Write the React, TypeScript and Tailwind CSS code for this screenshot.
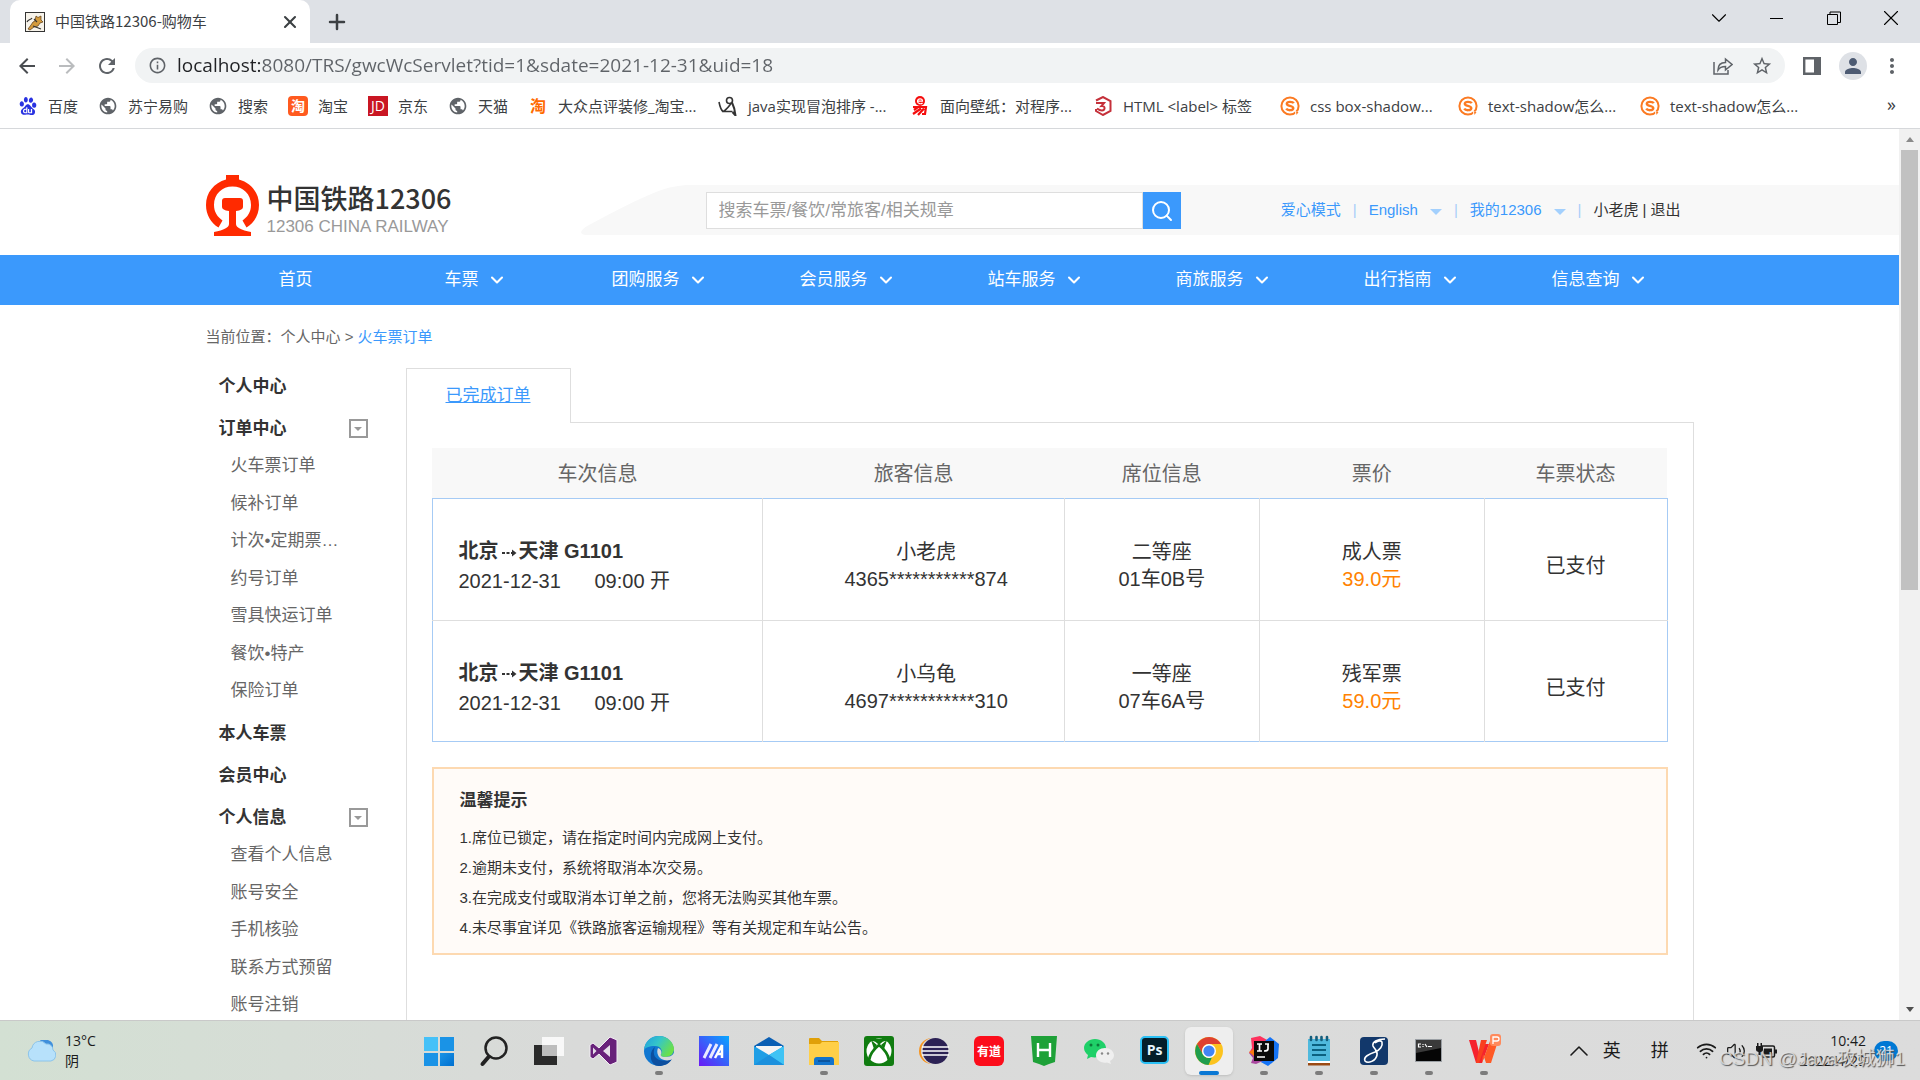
import { useState } from "react";
import type { ReactNode } from "react";
import { ChevronDown, ChevronUp, Plus, Search, X, Wifi, Volume2 } from "lucide-react";
import { MdArrowBack, MdArrowForward, MdInfoOutline, MdMoreVert, MdPerson, MdPublic, MdRefresh, MdStarBorder } from "react-icons/md";
import { SiBaidu } from "react-icons/si";

const NAV = ["团购服务", "会员服务", "站车服务", "商旅服务", "出行指南", "信息查询"];

const ORDER_LINKS = ["火车票订单", "候补订单", "计次•定期票…", "约号订单", "雪具快运订单", "餐饮•特产", "保险订单"];
const INFO_LINKS = ["查看个人信息", "账号安全", "手机核验", "联系方式预留", "账号注销"];

const ORDERS = [
  { name: "小老虎", idNo: "4365***********874", seat: "二等座", place: "01车0B号", kind: "成人票", price: "39.0元" },
  { name: "小乌龟", idNo: "4697***********310", seat: "一等座", place: "07车6A号", kind: "残军票", price: "59.0元" },
];

const TIPS = [
  "1.席位已锁定，请在指定时间内完成网上支付。",
  "2.逾期未支付，系统将取消本次交易。",
  "3.在完成支付或取消本订单之前，您将无法购买其他车票。",
  "4.未尽事宜详见《铁路旅客运输规程》等有关规定和车站公告。",
];

function Globe() {
  return <MdPublic className="size-5 text-[#5f6368]" />;
}

function Sogou() {
  return (
    <svg viewBox="0 0 20 20" className="size-5">
      <circle cx="10" cy="10" r="8.6" fill="none" stroke="#fb7a22" strokeWidth="2" />
      <path d="M13.8 7.2C12.8 5.6 7 5 6.8 7.7C6.7 10.4 13.4 9.3 13.3 12.2C13.2 14.9 7.4 14.6 6.2 12.7" fill="none" stroke="#fb7a22" strokeWidth="2.4" />
      <path d="M15 15l3.5 1-3 3.5z" fill="#fff" />
      <path d="M16 15.5l2.5.5-2 3z" fill="#fb7a22" />
    </svg>
  );
}

function TaoBadge() {
  return (
    <span className="flex size-5 items-center justify-center rounded-sm bg-[#ff5a1f] text-sm leading-none font-bold text-white">淘</span>
  );
}

function JdBadge() {
  return <span className="flex size-5 items-center justify-center bg-[#c91623] text-sm leading-none text-white">JD</span>;
}

const BOOKMARKS: { label: string; width: string; icon: ReactNode }[] = [
  { label: "百度", width: "w-[80px]", icon: <SiBaidu className="size-[18px] text-[#2932e1]" /> },
  { label: "苏宁易购", width: "w-[110px]", icon: <Globe /> },
  { label: "搜索", width: "w-[80px]", icon: <Globe /> },
  { label: "淘宝", width: "w-[80px]", icon: <TaoBadge /> },
  { label: "京东", width: "w-[80px]", icon: <JdBadge /> },
  { label: "天猫", width: "w-[80px]", icon: <Globe /> },
  {
    label: "大众点评装修_淘宝...",
    width: "w-[190px]",
    icon: <span className="text-base leading-none font-bold text-[#ff6a00]">淘</span>,
  },
  {
    label: "java实现冒泡排序 -...",
    width: "w-[192px]",
    icon: (
      <svg viewBox="0 0 20 20" className="size-5" fill="none" stroke="#333" strokeWidth="1.6">
        <circle cx="11.5" cy="4.5" r="3" />
        <path d="M1 6c1 5 2 8 4 9.5 3-1 5-4 8.500-8.500M4.500 15.500h10" />
        <path d="M14 6.500c2 4 3 8 3.500 13l-3-3.500" strokeWidth="2" />
      </svg>
    ),
  },
  {
    label: "面向壁纸：对程序...",
    width: "w-[183px]",
    icon: (
      <svg viewBox="0 0 20 20" className="size-5">
        <circle cx="10" cy="5" r="5" fill="#f50d0d" />
        <path d="M7.5 5.2h5C12.5 2 7.5 2 7.5 5.2c0 3 4 3 5 1.6" fill="none" stroke="#fff" strokeWidth="1.2" />
        <path d="M3 11h13l-1 7h-3M4 14l4-3M3 18l8-5.5M8 19l6-6.5" fill="none" stroke="#f50d0d" strokeWidth="2.2" />
      </svg>
    ),
  },
  {
    label: "HTML <label> 标签",
    width: "w-[187px]",
    icon: (
      <svg viewBox="0 0 20 20" className="size-5" fill="none" stroke="#c5303a" strokeWidth="2">
        <path d="M3 4.500L10 1l7.500 4v10L10 19l-7-4v-2" />
        <path d="M3 7h8L8.500 10c4-.5 4 4.500.5 4.500-2 0-3-.5-5-2" />
      </svg>
    ),
  },
  { label: "css box-shadow...", width: "w-[178px]", icon: <Sogou /> },
  { label: "text-shadow怎么...", width: "w-[182px]", icon: <Sogou /> },
  { label: "text-shadow怎么...", width: "w-[182px]", icon: <Sogou /> },
];

function BrowserChrome() {
  const [url, setUrl] = useState("localhost:8080/TRS/gwcWcServlet?tid=1&sdate=2021-12-31&uid=18");

  return (
    <header className="shrink-0 border-b border-[#d6d8db] bg-white font-['Open_Sans','Noto_Sans_CJK_SC',sans-serif] text-[#3c4043]">
      <div className="flex h-[43px] bg-[#dee1e6] pl-[10px]">
        <div className="flex w-[300px] items-center rounded-t-[10px] bg-white pr-[10px] pl-[15px]">
          <svg viewBox="0 0 20 20" className="size-5 shrink-0">
            <rect x=".5" y=".5" width="19" height="19" fill="#f7f3ea" stroke="#333" />
            <path d="M11 4l2 1.500 3-1.500v4l2 2-3 1-2 3-4 1-4 3-2-1 3-4 2-3 2-1z" fill="#d39a3c" stroke="#5a3a12" strokeWidth=".7" />
            <path d="M2 10c1-3 4-2 5-4M8 14l8 3M9 7l3 3" stroke="#333" strokeWidth="1.2" fill="none" />
          </svg>
          <span className="ml-[10px] flex-1 truncate font-['Noto_Sans_CJK_SC',sans-serif] text-[15px]">中国铁路12306-购物车</span>
          <button aria-label="关闭标签页" className="flex size-5 items-center justify-center">
            <X className="size-5" strokeWidth={2.5} />
          </button>
        </div>
        <button aria-label="新标签页" className="ml-[15px] flex items-center">
          <Plus className="size-6" strokeWidth={2.5} />
        </button>
        <div className="ml-auto flex h-9 text-black">
          <button aria-label="搜索标签页" className="flex w-[58px] items-center justify-center">
            <ChevronDown className="size-[26px]" strokeWidth={1} />
          </button>
          <button aria-label="最小化" className="flex w-[57px] items-center justify-center">
            <span className="h-px w-[13px] bg-black" />
          </button>
          <button aria-label="还原" className="flex w-[57px] items-center justify-center">
            <svg viewBox="0 0 14 14" className="size-[14px]" fill="none" stroke="#000">
              <path d="M.5 3.500h10v10h-10zM3 3V1h10.500v10.500H11" />
            </svg>
          </button>
          <button aria-label="关闭" className="flex w-[58px] items-center justify-center">
            <X className="size-[26px]" strokeWidth={1} />
          </button>
        </div>
      </div>

      <div className="flex h-[45px] items-center pr-[16px] pl-[15px] text-[#5f6368]">
        <button aria-label="后退" className="w-10">
          <MdArrowBack className="size-6 text-[#4a4d51]" />
        </button>
        <button aria-label="前进" className="w-10">
          <MdArrowForward className="size-6 text-[#babcbe]" />
        </button>
        <button aria-label="重新加载" className="w-10">
          <MdRefresh className="size-6" />
        </button>
        <div className="flex h-[35px] flex-1 items-center rounded-full bg-[#f1f3f4] pr-[12px] pl-[13px]">
          <MdInfoOutline className="size-[19px]" />
          <input
            aria-label="地址栏"
            value={url}
            onChange={(e) => setUrl(e.target.value)}
            className="ml-[10px] flex-1 bg-[linear-gradient(90deg,#202124_83px,#5f6368_83px)] bg-clip-text text-[19px] text-transparent outline-none"
          />
          <button aria-label="分享" className="mr-[18px]">
            <svg viewBox="0 0 20 20" className="size-5" fill="none" stroke="#5f6368" strokeWidth="1.5">
              <path d="M1 6v12h14v-4" />
              <path d="M5 14c0-5 3-7.500 7.500-7.500V3l6.500 5.500-6.500 5.500v-3.500C9 10.500 6.500 11.500 5 14z" />
            </svg>
          </button>
          <button aria-label="收藏">
            <MdStarBorder className="size-[22px]" />
          </button>
        </div>
        <button aria-label="侧边栏" className="ml-[18px]">
          <svg viewBox="0 0 18 18" className="size-[18px]">
            <path d="M1.200 1.200h15.600v15.600H1.200z" fill="none" stroke="#5f6368" strokeWidth="2.4" />
            <path d="M11 1h6v16h-6z" fill="#5f6368" />
          </svg>
        </button>
        <button aria-label="用户" className="ml-[18px] flex size-7 items-center justify-center rounded-full bg-[#dee1e6]">
          <MdPerson className="size-6 text-[#4d5b73]" />
        </button>
        <button aria-label="菜单" className="ml-[13px]">
          <MdMoreVert className="size-6" />
        </button>
      </div>

      <nav aria-label="书签" className="flex h-[40px] items-center overflow-hidden pr-[24px] pb-1 pl-[18px] text-[15px]">
        {BOOKMARKS.map((b, i) => (
          <a key={i} href="#" className={`flex shrink-0 items-center gap-[10px] whitespace-nowrap ${b.width}`}>
            <span className="flex w-5 shrink-0 justify-center">{b.icon}</span>
            {b.label}
          </a>
        ))}
        <button aria-label="更多书签" className="ml-auto pb-1 text-lg">
          »
        </button>
      </nav>
    </header>
  );
}

function SiteHeader() {
  return (
    <div className="grid h-[126px] shrink-0">
      {/* grey train-nose band behind the search bar */}
      <div className="col-start-1 row-start-1 flex pt-[56px] pl-[581px]">
        <svg viewBox="0 0 110 50" className="h-[50px] w-[110px] shrink-0">
          <path d="M4 50C-2 49-1 45 8 40C32 27 55 15 75 7C88 2 98 0 110 0V50Z" fill="#f8f8f8" />
        </svg>
        <div className="h-[50px] flex-1 bg-[#f8f8f8]" />
      </div>
      <div className="col-start-1 row-start-1 mx-auto flex w-full max-w-[1488px] items-start pt-[46px]">
        <a href="#" aria-label="中国铁路12306" className="flex w-[500px] gap-[8px]">
          <svg viewBox="0 0 53 61" className="h-[61px] w-[53px]">
            <path
              d="M20 0h13v4.500C45 8 53 17.500 53 30c0 10-5 18-12.500 22.500l-4-7C41.500 42 45 37 45 30c0-11-8-18.500-18.500-18.500S8 19 8 30c0 7 3.500 12 8.500 15.500l-4 7C5 48 0 40 0 30 0 17.500 8 8 20 4.500z"
              fill="#ff2a00"
            />
            <path d="M19 23h15q3 0 3 3v6q0 3-7 4v13q0 5 15 8v4H8v-4q15-3 15-8V36q-7-1-7-4v-6q0-3 3-3z" fill="#ff2a00" />
          </svg>
          <span className="flex flex-col pt-2">
            <span className="font-['Noto_Sans_CJK_SC',sans-serif] text-[27px] leading-[30px] font-medium text-[#333]">中国铁路12306</span>
            <span className="mt-[2px] text-[17px] leading-6 text-[#999]">12306 CHINA RAILWAY</span>
          </span>
        </a>
        <form className="mt-[17px] flex h-[37px]" onSubmit={(e) => e.preventDefault()}>
          <input
            type="text"
            aria-label="搜索"
            placeholder="搜索车票/餐饮/常旅客/相关规章"
            className="w-[437px] border border-[#dedede] bg-white px-[12px] text-[17px] placeholder-[#999] outline-none"
          />
          <button aria-label="搜索" className="flex w-[38px] items-center justify-center bg-[#3b99fc] text-white">
            <Search className="size-6" strokeWidth={2} />
          </button>
        </form>
        <div className="mt-[25px] ml-auto flex items-center pr-[13px] text-[15px] leading-5 text-[#3b99fc]">
          <a href="#">爱心模式</a>
          <span className="w-[28px] text-center text-[#a8cdf8]">|</span>
          <a href="#" className="flex items-center gap-3">
            English
            <span className="mt-1 border-x-6 border-t-6 border-x-transparent border-t-[#a3d0fd]" />
          </a>
          <span className="w-[28px] text-center text-[#a8cdf8]">|</span>
          <a href="#" className="flex items-center gap-3">
            我的12306
            <span className="mt-1 border-x-6 border-t-6 border-x-transparent border-t-[#a3d0fd]" />
          </a>
          <span className="w-[28px] text-center text-[#a8cdf8]">|</span>
          <span className="flex gap-1 text-[#333]">
            <a href="#">小老虎</a>|<a href="#">退出</a>
          </span>
        </div>
      </div>
    </div>
  );
}

function SideGroup({ title, links }: { title: string; links?: string[] }) {
  const [open, setOpen] = useState(true);

  return (
    <div className="pt-[5px]">
      <div className="flex h-[37px] items-center justify-between pr-[38px] pl-[13px] font-bold text-[#333]">
        <a href="#">{title}</a>
        {links && (
          <button
            aria-label={"展开" + title}
            onClick={() => setOpen(!open)}
            className="flex size-[19px] items-center justify-center border-2 border-[#999]"
          >
            <span className="border-x-4 border-t-4 border-x-transparent border-t-[#999]" />
          </button>
        )}
      </div>
      {links && open && (
        <ul className={links.length === 7 ? "grid h-[263px] auto-rows-fr" : "grid h-[188px] auto-rows-fr"}>
          {links.map((l) => (
            <li key={l} className="flex items-center pl-[25px] text-[#666]">
              <a href="#">{l}</a>
            </li>
          ))}
        </ul>
      )}
    </div>
  );
}

function DashedArrow() {
  return (
    <svg viewBox="0 0 16 10" className="mx-[2px] inline-block h-[10px] w-4">
      <path d="M1 5h3M5.500 5h3M10 5h2" stroke="#333" strokeWidth="1.8" />
      <path d="M11 1.500L15.500 5 11 8.500z" fill="#333" />
    </svg>
  );
}

function OrdersTable() {
  return (
    <table className="w-full table-fixed border-collapse text-center text-[20px] text-[#333]">
      <colgroup>
        <col className="w-[26.8%]" />
        <col className="w-[24.4%]" />
        <col className="w-[15.8%]" />
        <col className="w-[18.2%]" />
        <col className="w-[14.8%]" />
      </colgroup>
      <thead>
        <tr className="h-[50px] bg-[#f8f8f8] text-[#666]">
          <th className="pt-[3px] font-normal">车次信息</th>
          <th className="pt-[3px] font-normal">旅客信息</th>
          <th className="pt-[3px] font-normal">席位信息</th>
          <th className="pt-[3px] font-normal">票价</th>
          <th className="pt-[3px] font-normal">车票状态</th>
        </tr>
      </thead>
      <tbody className="border border-[#a6cbf5]">
        {ORDERS.map((o, i) => (
          <tr key={i} className={i > 0 ? "h-[121px] border-t border-[#dedede]" : "h-[122px]"}>
            <td className="pt-[14px] pl-[26px] text-left leading-[30px]">
              <div className="font-bold">
                北京
                <DashedArrow />
                天津 G1101
              </div>
              <div>
                <span className="inline-block w-[136px]">2021-12-31</span>
                09:00 开
              </div>
            </td>
            <td className="border-l border-[#dedede] pt-[14px] pl-[25px] leading-[27px]">
              {o.name}
              <br />
              {o.idNo}
            </td>
            <td className="border-l border-[#dedede] pt-[14px] leading-[27px]">
              {o.seat}
              <br />
              {o.place}
            </td>
            <td className="border-l border-[#dedede] pt-[14px] leading-[27px]">
              {o.kind}
              <br />
              <span className="text-[#ff8201]">{o.price}</span>
            </td>
            <td className="border-l border-[#dedede] pt-[14px]">已支付</td>
          </tr>
        ))}
      </tbody>
    </table>
  );
}

function Page() {
  return (
    <div className="flex min-w-0 flex-1 flex-col overflow-hidden bg-white font-['Liberation_Sans','Noto_Sans_CJK_SC',sans-serif]">
      <SiteHeader />
      <nav className="shrink-0 bg-[#3b99fc] text-[17px] text-white">
        <div className="mx-auto flex h-[50px] w-full max-w-[1488px] items-center">
          <a href="#" className="w-[180px] text-center">
            首页
          </a>
          <a href="#" className="flex w-[180px] items-center justify-center gap-2">
            车票
            <ChevronDown className="size-5" strokeWidth={2.5} />
          </a>
          {NAV.map((n) => (
            <a key={n} href="#" className="flex flex-1 items-center justify-center gap-2">
              {n}
              <ChevronDown className="size-5" strokeWidth={2.5} />
            </a>
          ))}
        </div>
      </nav>

      <div className="mx-auto flex w-full max-w-[1488px] flex-1 flex-col">
        <div className="pt-5 text-[15px] leading-6 text-[#666]">
          当前位置：个人中心 &gt;{" "}
          <a href="#" className="text-[#3b99fc]">
            火车票订单
          </a>
        </div>
        <div className="flex flex-1 pt-[14px]">
          <aside className="w-[200px] shrink-0 text-[17px]">
            <SideGroup title="个人中心" />
            <SideGroup title="订单中心" links={ORDER_LINKS} />
            <SideGroup title="本人车票" />
            <SideGroup title="会员中心" />
            <SideGroup title="个人信息" links={INFO_LINKS} />
          </aside>
          <main className="flex flex-1 flex-col pt-[5px]">
            <div className="flex h-[55px]">
              <div className="flex w-[165px] items-center justify-center border-x border-t border-[#dedede]">
                <a href="#" className="text-[17px] text-[#3b99fc] underline">
                  已完成订单
                </a>
              </div>
              <div className="flex-1 border-b border-[#dedede]" />
            </div>
            <div className="flex-1 border-x border-[#dedede] px-[25px] pt-[25px]">
              <OrdersTable />
              <section className="mt-[25px] border-2 border-[#fdd9b1] bg-[#fffbf8] px-[26px] pt-[17px] pb-[10px] text-[#333]">
                <h2 className="text-[17px] leading-[30px] font-bold">温馨提示</h2>
                <ul className="pt-[7px] text-[15px] leading-[30px]">
                  {TIPS.map((t) => (
                    <li key={t}>{t}</li>
                  ))}
                </ul>
              </section>
            </div>
          </main>
        </div>
      </div>
    </div>
  );
}

function ScrollBar() {
  return (
    <div className="flex w-[21px] shrink-0 flex-col items-center bg-[#f1f1f1]">
      <span className="mt-2 border-x-4 border-b-5 border-x-transparent border-b-[#8a8a8a]" />
      <span className="mt-2 h-[440px] w-[17px] bg-[#c1c1c1]" />
      <span className="mt-auto mb-2 border-x-4 border-t-5 border-x-transparent border-t-[#505050]" />
    </div>
  );
}

/* ---------- taskbar icons, all on a 30x30 grid ---------- */

const TASKS: { name: string; running?: boolean; active?: boolean; art: ReactNode }[] = [
  {
    name: "开始",
    art: (
      <>
        <linearGradient id="win" x1="0" y1="0" x2="1" y2="1">
          <stop offset="0" stopColor="#1a93e6" />
          <stop offset="1" stopColor="#0070d0" />
        </linearGradient>
        <path d="M0 1h14v14H0zM16 1h14v14H16zM0 17h14v13H0z" fill="#1a93e6" />
        <path d="M0 1h14v14H0z" fill="#45c1f8" />
        <path d="M16 17h14v13H16z" fill="url(#win)" />
      </>
    ),
  },
  {
    name: "搜索",
    art: (
      <g fill="none" stroke="#222">
        <circle cx="17" cy="12" r="10.5" strokeWidth="2.5" />
        <path d="M9.500 21l-6 7" strokeWidth="4" strokeLinecap="round" />
      </g>
    ),
  },
  {
    name: "任务视图",
    art: (
      <>
        <path d="M0 9h23v20H0z" fill="#2b2b2b" />
        <path d="M8 1h22v19H8z" fill="#f8f8f8" />
        <path d="M8 9h15v11H8z" fill="#bdbdbd" />
      </>
    ),
  },
  {
    name: "Visual Studio",
    art: (
      <>
        <path d="M21 1l7 3v22l-7 3L10 18l-6 5-3-2V9l3-2 6 5z" fill="#68217a" stroke="#f3eef5" strokeWidth="1" />
        <path d="M21 9v12l-7-6zM4 11.500l3.500 3.500L4 18.500z" fill="#e5dfe8" />
      </>
    ),
  },
  {
    name: "Edge",
    running: true,
    art: (
      <>
        <linearGradient id="edge" x1="0" y1="0" x2="1" y2=".5">
          <stop offset="0" stopColor="#1f9de0" />
          <stop offset=".5" stopColor="#35c6c9" />
          <stop offset="1" stopColor="#6be04a" />
        </linearGradient>
        <circle cx="15" cy="15" r="15" fill="#1177d1" />
        <path d="M0 14C1 4 8 0 15 0c9 0 15 7 15 13 0 5-4 8-9 8-3 0-5-1-4-3 2-3 0-8-6-8C5 10 1 12 0 14z" fill="url(#edge)" />
        <path d="M11 11c-4 9 2 17 17 12-3 5-8 7-13 7C6 30 4 16 11 11z" fill="#0c4f9f" />
        <path d="M14 12c3 1 4 4 3 6-1 2 1 3 4 3 4 0 7-1 9-4l1 3-2 3c-6 3-13 1-15-4-1-2-1-5 0-7z" fill="#dadada" />
      </>
    ),
  },
  {
    name: "MyASUS",
    art: (
      <>
        <linearGradient id="asus" x1="0" y1="1" x2="1" y2="0">
          <stop offset="0" stopColor="#6a18f5" />
          <stop offset="1" stopColor="#06a8ff" />
        </linearGradient>
        <path d="M0 0h30v30H0z" fill="url(#asus)" />
        <path d="M5 22l7-14M11 22l7-14" stroke="#e9eaff" strokeWidth="3" />
        <path d="M16 22l7-13v13M19 18h3" stroke="#fff" strokeWidth="2.5" fill="none" />
      </>
    ),
  },
  {
    name: "邮件",
    art: (
      <>
        <path d="M0 10L15 1l15 9v4H0z" fill="#0a5fb4" />
        <path d="M2 10h26v10H2z" fill="#f4f4f4" />
        <path d="M0 10l15 9 15-9v19H0z" fill="#1f9ee5" />
        <path d="M15 19l15-9v19z" fill="#3fc3f4" />
        <path d="M0 29l15-10 15 10z" fill="#1b90dd" />
      </>
    ),
  },
  {
    name: "文件资源管理器",
    running: true,
    art: (
      <>
        <path d="M0 3q0-1 1-1h9l3 3h16v6H0z" fill="#e0a008" />
        <path d="M0 8h11l2-2h17v23H0z" fill="#ffcf48" />
        <path d="M5 29v-5q0-3 3-3h14q3 0 3 3v5z" fill="#1273cc" />
        <path d="M9 25h12" stroke="#0a4b90" strokeWidth="1.5" />
      </>
    ),
  },
  {
    name: "Xbox",
    art: (
      <>
        <rect width="30" height="30" rx="3" fill="#107c10" />
        <circle cx="15" cy="15" r="12.5" fill="#fff" />
        <path d="M7 4c3-1 6 1 8 3 2-2 5-4 8-3M15 9c-5 4-9 9-10 15M15 9c5 4 9 9 10 15" fill="none" stroke="#107c10" strokeWidth="2.8" />
        <path d="M15 7l-5-4h10zM7 4l6 5-3 4zM23 4l-6 5 3 4z" fill="#107c10" />
      </>
    ),
  },
  {
    name: "Eclipse",
    art: (
      <>
        <circle cx="13" cy="15" r="13" fill="#f7941e" />
        <circle cx="15.5" cy="15" r="13.5" fill="#d9d9d9" />
        <circle cx="16.5" cy="15" r="13" fill="#2c2255" />
        <path d="M3 11h27M3 15h27M3 19h27" stroke="#fff" strokeWidth="1.7" />
      </>
    ),
  },
  {
    name: "有道词典",
    art: (
      <>
        <rect width="30" height="30" rx="6" fill="#fc0d1b" />
        <text x="15" y="19.5" textAnchor="middle" fontSize="12" fontWeight="700" fill="#fff">
          有道
        </text>
      </>
    ),
  },
  {
    name: "HBuilder",
    art: (
      <>
        <path d="M2 0h26l-2 26-6 2-5 2-5-2-6-2z" fill="#1ea138" />
        <path d="M9 7v14M21 7v14M9 14h12" stroke="#fff" strokeWidth="2.4" />
      </>
    ),
  },
  {
    name: "微信",
    art: (
      <>
        <path d="M11 3C5 3 0 7 0 12c0 3 2 5.500 4 7l-1 4 4-2c8 2 15-3 15-9 0-5-5-9-11-9z" fill="#1fd068" />
        <path d="M21 12c-5 0-9 3-9 7.500 0 4.500 5 8 11 7l4 1.500-1-3c2-1 4-3 4-5.500 0-4.500-4-7.500-9-7.500z" fill="#efefef" />
        <circle cx="7" cy="9" r="1.5" fill="#0c7a3a" />
        <circle cx="14" cy="9" r="1.5" fill="#0c7a3a" />
        <circle cx="18" cy="17.5" r="1.2" fill="#888" />
        <circle cx="24" cy="17.5" r="1.2" fill="#888" />
      </>
    ),
  },
  {
    name: "Photoshop",
    art: (
      <>
        <rect x="2" y="1" width="27" height="26" rx="4" fill="#041e2b" stroke="#2bc0f5" strokeWidth="2" />
        <text x="15.5" y="19" textAnchor="middle" fontSize="14" fontWeight="700" fill="#e6f6ff">
          Ps
        </text>
      </>
    ),
  },
  {
    name: "Chrome",
    active: true,
    art: (
      <>
        <circle cx="15" cy="15" r="14" fill="#fcc31e" />
        <path d="M3 8a14 14 0 0 1 24.200 0H15a7 7 0 0 0-6.100 10.500z" fill="#de4032" />
        <path d="M3 8l6 10.500A7 7 0 0 0 18 21.300L14.500 29A14 14 0 0 1 3 8z" fill="#1f9d4d" />
        <circle cx="15" cy="15" r="7" fill="#fff" />
        <circle cx="15" cy="15" r="5.6" fill="#4285f4" />
      </>
    ),
  },
  {
    name: "IntelliJ IDEA",
    running: true,
    art: (
      <>
        <path d="M2 2l9-2 9 5-5 10L0 17l3-5z" fill="#fe315d" />
        <path d="M16 5l5-4 9 7-1 14-10 8-9-5z" fill="#1473f6" />
        <path d="M0 17l8-3 8 10-9 4-5-1 2-5z" fill="#a9479f" />
        <path d="M0 16l5-3v7z" fill="#f97a12" />
        <path d="M5 5h20v20H5z" fill="#0a0a0a" />
        <path d="M8 8h5M10.500 8v7M8 15h5M19 8v5q0 2-4 2M16 8h4M8 21h8" stroke="#fff" strokeWidth="1.7" fill="none" />
      </>
    ),
  },
  {
    name: "记事本",
    running: true,
    art: (
      <>
        <path d="M4 3h22v22H4z" fill="#4fb9dd" />
        <path d="M4 25h22v2H4z" fill="#fff" />
        <path d="M4 27h22v2.500H4z" fill="#9a4a13" />
        <path d="M8 9h14M8 14h14M8 19h14" stroke="#0b6180" strokeWidth="1.8" />
        <path d="M7 1v3M12.500 1v3M17.500 1v3M23 1v3" stroke="#135d7c" strokeWidth="2.6" strokeLinecap="round" />
      </>
    ),
  },
  {
    name: "SQLyog",
    running: true,
    art: (
      <>
        <rect x="1" y="1" width="28" height="28" rx="4" fill="#12386b" />
        <path
          d="M26 3C18 3 13 6 14 10c1 3 5 4 4 9-1 6-9 9-12 6-2-4 4-7 10-9 5-2 8-6 7-10-1-2-5-1-7 1"
          fill="none"
          stroke="#fff"
          strokeWidth="1.6"
        />
      </>
    ),
  },
  {
    name: "命令提示符",
    running: true,
    art: (
      <>
        <path d="M1.500 3.500h26v22h-26z" fill="#050505" stroke="#9a9fa4" />
        <path d="M2 4h25v8L2 17z" fill="#3a3a3a" />
        <path d="M7 8H4.500v3H7M9 8v1M9 10v1M11 8l2 3M14 10.500h4" stroke="#fff" strokeWidth="1.2" fill="none" />
      </>
    ),
  },
  {
    name: "WPS",
    running: true,
    art: (
      <>
        <path d="M0 4h7l3 12 4-8h6l-7 19H7z" fill="#f5222d" />
        <path d="M13 27L21 5h8L22 27h-5l-3-9z" fill="#ff5a26" />
        <path d="M12 4h6l-8 23H7z" fill="#f9401f" />
        <rect x="21" y="-2" width="11" height="12" rx="3" fill="#ff8a5c" />
        <path d="M24 8V1h4q2 0 2 2t-2 2h-4" stroke="#fff" strokeWidth="1.3" fill="none" />
      </>
    ),
  },
];

function Taskbar() {
  return (
    <footer className="flex h-[60px] shrink-0 items-center border-t border-[#c9c9c9] bg-linear-to-r from-[#d3e0d3] via-[#d9dad9] via-30% to-[#dcdcdc] font-['Open_Sans','Noto_Sans_CJK_SC',sans-serif] text-[14px] text-[#1b1b1b]">
      <button className="flex w-[411px] items-center gap-[9px] pl-[26px] text-left">
        <svg viewBox="0 0 30 26" className="h-[26px] w-[30px]">
          <path d="M14 2h8q6 2 5 8l-6 2z" fill="#3f8fdc" />
          <path d="M8 23a7 7 0 0 1-2-13 8 8 0 0 1 14-4 6 6 0 0 1 7 6 6 6 0 0 1-2 11z" fill="#b7e1fb" stroke="#8cc4ea" />
        </svg>
        <span className="leading-5">
          13°C
          <br />阴
        </span>
      </button>
      <div className="flex">
        {TASKS.map((t) => (
          <button key={t.name} aria-label={t.name} className="flex w-[55px] justify-center">
            <span
              className={
                t.active
                  ? "flex h-12 w-12 flex-col items-center rounded-md bg-[#eeeeee] pt-[9px] shadow-sm"
                  : "flex h-12 w-12 flex-col items-center pt-[9px]"
              }
            >
              <svg viewBox="0 0 30 30" className="size-[30px] overflow-visible">
                {t.art}
              </svg>
              {t.active && <span className="mt-[5px] h-1 w-5 rounded-full bg-[#0b78d4]" />}
              {t.running && <span className="mt-[5px] h-1 w-2 rounded-full bg-[#7c7c7c]" />}
            </span>
          </button>
        ))}
      </div>
      <div className="relative ml-auto flex items-center pr-[22px]">
        <button aria-label="显示隐藏的图标" className="mr-[8px]">
          <ChevronUp className="size-8" strokeWidth={1.2} />
        </button>
        <button className="mr-[30px] text-[18px]">英</button>
        <button className="mr-[27px] text-[18px]">拼</button>
        <button aria-label="网络和音量" className="mr-[23px] flex items-center gap-[9px]">
          <Wifi className="size-[21px]" strokeWidth={2} />
          <Volume2 className="size-5" strokeWidth={1.5} />
          <svg viewBox="0 0 22 16" className="h-4 w-[22px]">
            <path d="M7 3h11q1.500 0 1.500 1.500v8q0 1.500-1.500 1.500H8q-1.500 0-1.500-1.500V9" fill="none" stroke="#1b1b1b" strokeWidth="1.5" />
            <path d="M9 5.500h8v6H8.500V9zM20 6.500h2v4h-2zM1 3h7v4q0 1.500-2 2v3H3.500V9Q1 8.500 1 7zM2 0h1.500v3H2zM5.500 0H7v3H5.500z" fill="#1b1b1b" />
          </svg>
        </button>
        <button className="mr-[8px] text-right leading-5">
          10:42
          <br />
          2022/4/29
        </button>
        <span className="flex h-5 w-6 items-center justify-center rounded-full bg-[#0078d4] text-xs text-white">21</span>
        {/* watermark, printed across the clock */}
        <span className="absolute right-[15px] bottom-0 font-['Liberation_Sans','Noto_Sans_CJK_SC',sans-serif] text-[19px] leading-6 whitespace-nowrap text-[#e6e6e6]/80 [text-shadow:1px_1px_1px_#555]">
          CSDN @Java攻城狮1
        </span>
      </div>
    </footer>
  );
}

export default function App() {
  return (
    <div className="flex h-screen flex-col overflow-hidden">
      <BrowserChrome />
      <div className="flex min-h-0 flex-1">
        <Page />
        <ScrollBar />
      </div>
      <Taskbar />
    </div>
  );
}
